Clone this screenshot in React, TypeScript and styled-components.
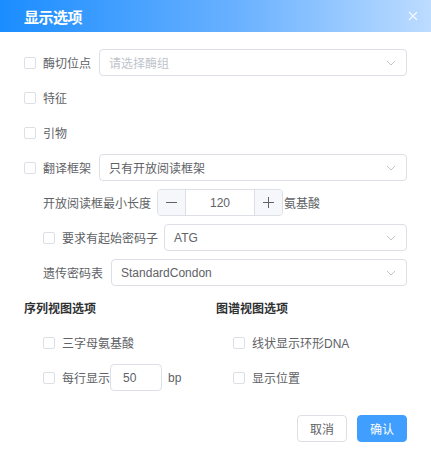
import styled, { createGlobalStyle } from 'styled-components';

const GlobalStyle = createGlobalStyle`
  body {
    margin: 0;
    background: #fff;
    font-family: "Liberation Sans", "Noto Sans CJK SC", sans-serif;
    font-size: 12px;
    color: #606266;
  }
`;

function Chevron() {
  return (
    <svg width="10" height="6" viewBox="0 0 10 6">
      <path d="M1 1 L5 5 L9 1" fill="none" stroke="#c0c4cc" strokeWidth="1" />
    </svg>
  );
}

function CheckBox({ label }: { label: string }) {
  return (
    <CheckLabel>
      <Box />
      <span>{label}</span>
    </CheckLabel>
  );
}

function SelectBox({ value, placeholder }: { value?: string; placeholder?: string }) {
  return (
    <Select $empty={!value}>
      <span>{value || placeholder}</span>
      <Chevron />
    </Select>
  );
}

export default function App() {
  return (
    <>
      <GlobalStyle />
      <Dialog>
        <Header>
          <Title>显示选项</Title>
          <svg width="10" height="10" viewBox="0 0 10 10">
            <path d="M1 1 L9 9 M9 1 L1 9" stroke="rgba(255,255,255,0.85)" strokeWidth="1.2" />
          </svg>
        </Header>

        <Body>
          <Row $gap={8}>
            <CheckBox label="酶切位点" />
            <SelectBox placeholder="请选择酶组" />
          </Row>
          <Row>
            <CheckBox label="特征" />
          </Row>
          <Row>
            <CheckBox label="引物" />
          </Row>
          <Row $gap={8}>
            <CheckBox label="翻译框架" />
            <SelectBox value="只有开放阅读框架" />
          </Row>
          <Row $indent={19} $gap={6}>
            <span>开放阅读框最小长度</span>
            <Stepper>
              <StepButton $side="left">
                <svg width="11" height="11" viewBox="0 0 11 11">
                  <path d="M0 5.5 H11" stroke="#606266" strokeWidth="1" />
                </svg>
              </StepButton>
              <StepValue>120</StepValue>
              <StepButton $side="right">
                <svg width="11" height="11" viewBox="0 0 11 11">
                  <path d="M0 5.5 H11 M5.5 0 V11" stroke="#606266" strokeWidth="1" />
                </svg>
              </StepButton>
            </Stepper>
            <Unit $offset={-5}>氨基酸</Unit>
          </Row>
          <Row $indent={19} $gap={6}>
            <CheckBox label="要求有起始密码子" />
            <SelectBox value="ATG" />
          </Row>
          <Row $indent={19} $gap={8}>
            <span>遗传密码表</span>
            <SelectBox value="StandardCondon" />
          </Row>

          <Options>
            <Column>
              <SectionTitle>序列视图选项</SectionTitle>
              <Row $indent={19}>
                <CheckBox label="三字母氨基酸" />
              </Row>
              <Row $indent={19}>
                <CheckBox label="每行显示" />
                <SmallInput>50</SmallInput>
                <Unit $offset={6}>bp</Unit>
              </Row>
            </Column>
            <Column>
              <SectionTitle>图谱视图选项</SectionTitle>
              <Row $indent={17}>
                <CheckBox label="线状显示环形DNA" />
              </Row>
              <Row $indent={17}>
                <CheckBox label="显示位置" />
              </Row>
            </Column>
          </Options>
        </Body>

        <Footer>
          <Button>取消</Button>
          <Button $primary>确认</Button>
        </Footer>
      </Dialog>
    </>
  );
}

const Dialog = styled.div`
  width: 431px;
  height: 457px;
  background: #fff;
  display: flex;
  flex-direction: column;
`;

const Header = styled.div`
  height: 32px;
  flex-shrink: 0;
  padding: 0 13px 0 24px;
  display: flex;
  align-items: center;
  justify-content: space-between;
  background: linear-gradient(to right, #1b8dff, #69b1ff 55%, #bddcff);
`;

const Title = styled.div`
  font-size: 15px;
  font-weight: 700;
  color: #fff;
  letter-spacing: -0.5px;
`;

const Body = styled.div`
  padding: 17px 24px 0;
  display: flex;
  flex-direction: column;
  gap: 8px;
`;

const Row = styled.div<{ $indent?: number; $gap?: number }>`
  height: 27px;
  display: flex;
  align-items: center;
  padding-left: ${(p) => p.$indent ?? 0}px;
  gap: ${(p) => p.$gap ?? 0}px;
  color: #606266;
  white-space: nowrap;
`;

const CheckLabel = styled.label`
  display: flex;
  align-items: center;
  gap: 7px;
  color: #606266;
`;

const Box = styled.span`
  width: 12px;
  height: 12px;
  box-sizing: border-box;
  border: 1px solid #dcdfe6;
  border-radius: 2px;
  background: #fff;
`;

const Select = styled.div<{ $empty: boolean }>`
  flex: 1;
  height: 27px;
  box-sizing: border-box;
  border: 1px solid #dcdfe6;
  border-radius: 4px;
  padding: 0 10px 0 9px;
  display: flex;
  align-items: center;
  justify-content: space-between;
  color: ${(p) => (p.$empty ? '#c0c4cc' : '#606266')};
`;

const Stepper = styled.div`
  width: 126px;
  height: 27px;
  box-sizing: border-box;
  border: 1px solid #dcdfe6;
  border-radius: 4px;
  display: flex;
  overflow: hidden;
`;

const StepButton = styled.div<{ $side: 'left' | 'right' }>`
  width: 27px;
  background: #f5f7fa;
  display: flex;
  align-items: center;
  justify-content: center;
  border-${(p) => (p.$side === 'left' ? 'right' : 'left')}: 1px solid #dcdfe6;
`;

const StepValue = styled.div`
  flex: 1;
  display: flex;
  align-items: center;
  justify-content: center;
  color: #606266;
`;

const Unit = styled.span<{ $offset: number }>`
  margin-left: ${(p) => p.$offset}px;
  color: #606266;
`;

const SmallInput = styled.div`
  width: 52px;
  height: 27px;
  box-sizing: border-box;
  border: 1px solid #dcdfe6;
  border-radius: 4px;
  padding-left: 12px;
  display: flex;
  align-items: center;
  color: #606266;
`;

const Options = styled.div`
  display: grid;
  grid-template-columns: 192px 1fr;
`;

const Column = styled.div`
  display: flex;
  flex-direction: column;
  gap: 8px;
`;

const SectionTitle = styled.div`
  height: 27px;
  display: flex;
  align-items: center;
  font-weight: 700;
  color: #303133;
`;

const Footer = styled.div`
  margin-top: 24px;
  padding: 0 24px;
  display: flex;
  justify-content: flex-end;
  gap: 10px;
`;

const Button = styled.button<{ $primary?: boolean }>`
  width: 50px;
  height: 27px;
  box-sizing: border-box;
  border-radius: 4px;
  font-family: inherit;
  font-size: 12px;
  cursor: pointer;
  border: 1px solid ${(p) => (p.$primary ? '#409eff' : '#dcdfe6')};
  background: ${(p) => (p.$primary ? '#409eff' : '#fff')};
  color: ${(p) => (p.$primary ? '#fff' : '#606266')};
`;
